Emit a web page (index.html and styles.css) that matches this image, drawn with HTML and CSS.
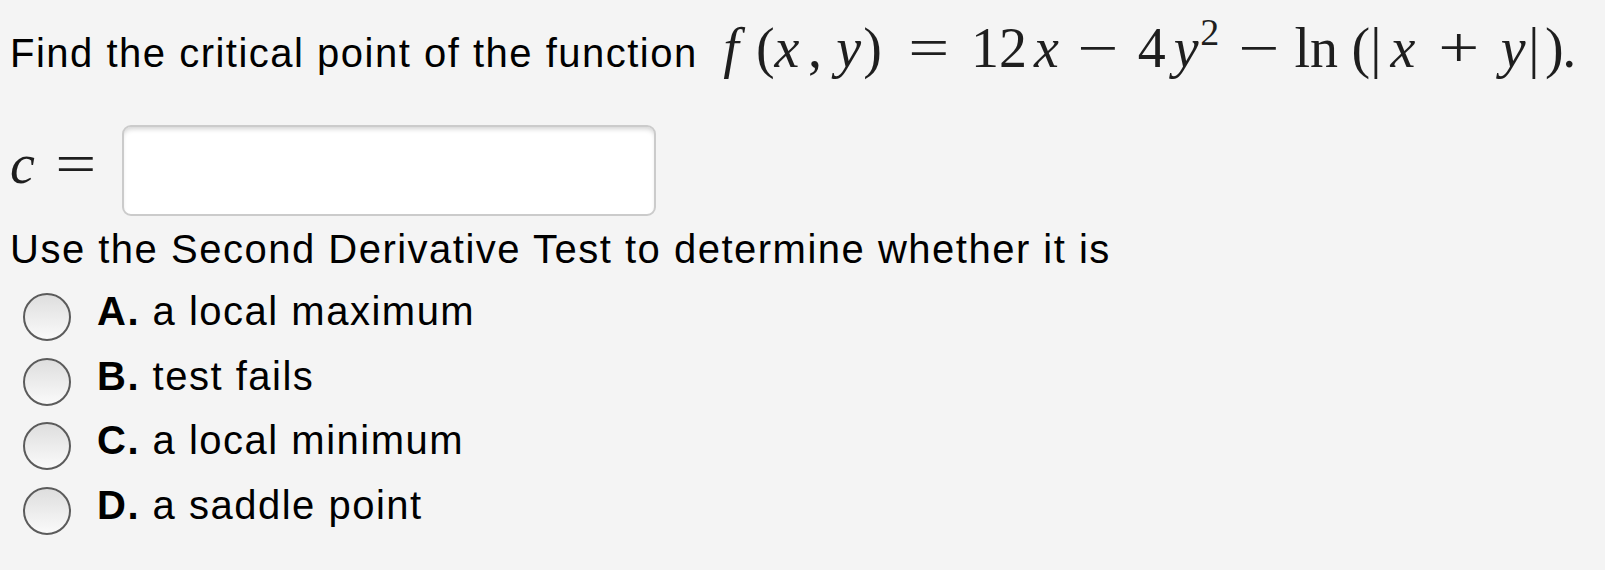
FILE: index.html
```html
<!DOCTYPE html>
<html>
<head>
<meta charset="utf-8">
<link rel="stylesheet" href="styles.css">
</head>
<body>
<div class="page">
  <div class="title">Find the critical point of the function <span class="math formula"><i class="m-f">f</i><span class="m-open">(</span><i>x</i><span class="m-comma">,</span><i class="m-y1">y</i><span class="m-close">)</span><span class="op m-eq">=</span><span class="m-after-eq">12</span><i class="m-x2">x</i><span class="op m-minus">−</span><span class="m-four">4</span><i class="m-y2">y</i><span class="sup">2</span><span class="op m-minus2">−</span><span class="m-ln">ln</span><span class="m-open2">(|</span><i class="m-x3">x</i><span class="op m-plus">+</span><i class="m-y3">y</i><span class="m-bar">|</span><span class="m-close2">)</span><span class="m-dot">.</span></span></div>

  <div class="answer-row">
    <span class="math label"><i>c</i><span class="op label-eq">=</span></span>
    <div class="answer-box"></div>
  </div>

  <div class="prompt">Use the Second Derivative Test to determine whether it is</div>

  <ul class="options">
    <li class="option"><span class="radio"></span><span class="opt-text"><b>A.</b> a local maximum</span></li>
    <li class="option"><span class="radio"></span><span class="opt-text"><b>B.</b> test fails</span></li>
    <li class="option"><span class="radio"></span><span class="opt-text"><b>C.</b> a local minimum</span></li>
    <li class="option"><span class="radio"></span><span class="opt-text"><b>D.</b> a saddle point</span></li>
  </ul>
</div>
</body>
</html>
```

FILE: styles.css
```css
html, body {
  margin: 0;
  padding: 0;
  background: #f4f4f4;
}

body {
  font-family: "Liberation Sans", Helvetica, Arial, sans-serif;
  font-size: 40px;
  letter-spacing: 1.5px;
  color: #000;
}

.page {
  padding: 23px 0 0 10px;
}

.title {
  height: 60px;
  line-height: 60px;
  white-space: nowrap;
}

/* ---------- math (MathJax-like) ---------- */
.math {
  font-family: "Liberation Serif", "Times New Roman", serif;
  font-size: 56px;
  line-height: 40px;
  color: #1e1e1e;
  letter-spacing: 0;
}

.math i {
  font-style: italic;
}

.op {
  display: inline-block;
  transform: scaleX(1.3);
}

.m-f { margin-left: 13px; }
.m-open { margin-left: 17px; }
.m-comma { margin-left: 8.5px; }
.m-y1 { margin-left: 14.4px; }
.m-close { margin-left: 2px; }
.m-eq { margin-left: 31.4px; }
.m-after-eq { margin-left: 26.2px; }
.m-x2 { margin-left: 7px; }
.m-minus { margin-left: 23.2px; }
.m-four { margin-left: 24.2px; }
.m-y2 { margin-left: 7.9px; }
.m-minus2 { margin-left: 24.2px; }
.m-ln { margin-left: 19.4px; }
.m-open2 { margin-left: 13.6px; }
.m-x3 { margin-left: 9px; }
.m-plus { margin-left: 27.2px; }
.m-y3 { margin-left: 26.6px; }
.m-bar { margin-left: 2.6px; }
.m-close2 { margin-left: 5.5px; }
.m-dot { margin-left: -1.4px; }

.sup {
  margin-left: 1.7px;
  font-size: 38px;
  line-height: 0;
  vertical-align: 22px;
}

/* ---------- answer row ---------- */
.answer-row {
  display: flex;
  margin-top: 42px;
  height: 91px;
}

.label {
  align-self: flex-start;
  margin-top: 9px;
  line-height: 60px;
}

.label-eq {
  margin-left: 25px;
}

.answer-box {
  margin-left: 31px;
  width: 534px;
  height: 91px;
  box-sizing: border-box;
  border: 2px solid #cbcbcb;
  border-radius: 9px;
  background: #fff;
  box-shadow: inset 0 4px 5px -2px rgba(0, 0, 0, 0.18);
}

/* ---------- prompt & options ---------- */
.prompt {
  margin-top: 9px;
  height: 48px;
  line-height: 48px;
}

.options {
  list-style: none;
  margin: 6px 0 0 0;
  padding: 0;
}

.option {
  display: flex;
  height: 64.5px;
  line-height: 64.5px;
}

.radio {
  align-self: flex-start;
  margin: 14px 0 0 13px;
  width: 48px;
  height: 48px;
  box-sizing: border-box;
  border: 2.5px solid #5b5b5b;
  border-radius: 50%;
  background: linear-gradient(to bottom, #dedede, #fafafa);
}

.opt-text {
  margin-left: 26px;
}

.opt-text b {
  font-weight: bold;
}
```
